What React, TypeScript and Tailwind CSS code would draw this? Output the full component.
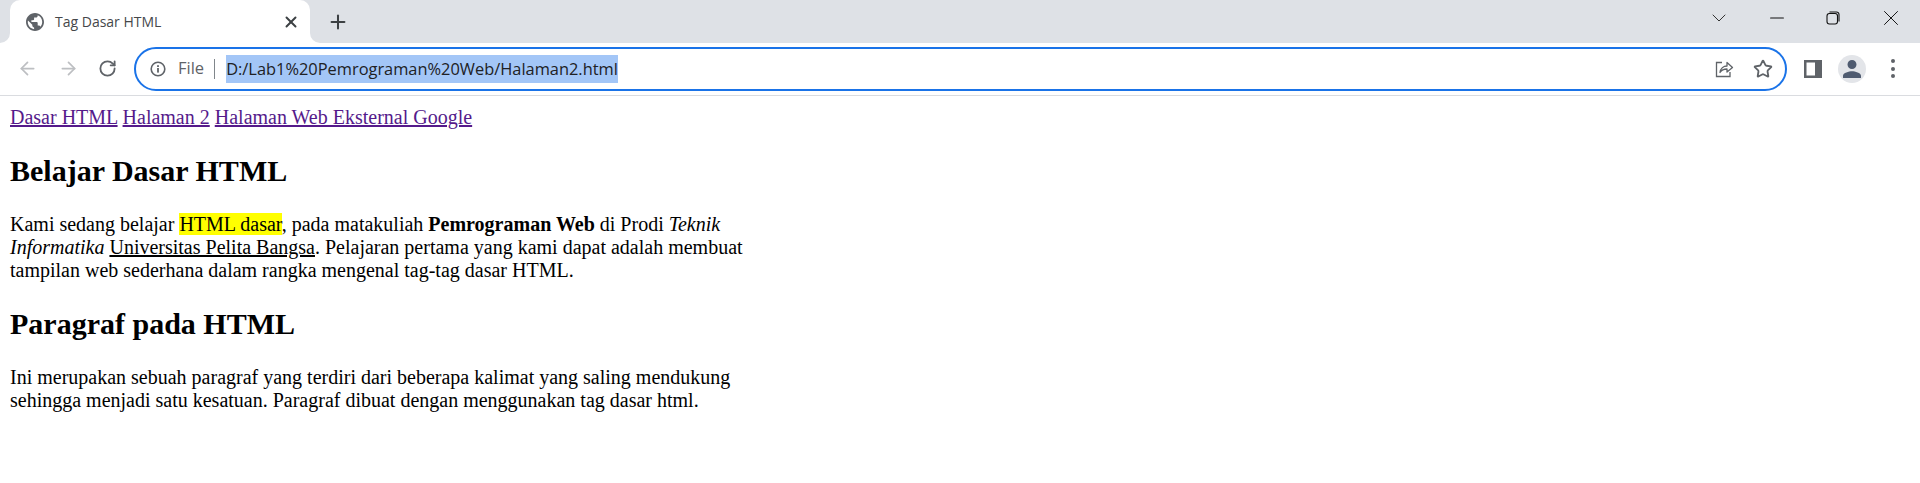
import React from 'react';
import { ArrowLeft, ArrowRight, RotateCw, X, Plus, Star, ChevronDown, Minus } from 'lucide-react';

const Corner: React.FC<{ side: 'left' | 'right' }> = ({ side }) => (
  <svg
    width="10"
    height="10"
    viewBox="0 0 10 10"
    className={side === 'left' ? 'absolute bottom-0 left-[-10px]' : 'absolute bottom-0 right-[-10px]'}
  >
    <path d={side === 'left' ? 'M10 0V10H0A10 10 0 0 0 10 0Z' : 'M0 0V10H10A10 10 0 0 1 0 0Z'} fill="#fff" />
  </svg>
);

const TabStrip: React.FC = () => (
  <div className="flex h-[43px] items-center bg-[#dee1e6] pl-[10px]">
    <div className="relative flex h-[43px] w-[300px] items-center rounded-t-[10px] bg-white pl-[16px] pr-[10px]">
      <Corner side="left" />
      <svg width="18" height="18" viewBox="2 2 20 20" className="shrink-0 fill-[#5f6368]">
        <path d="M12 2C6.48 2 2 6.48 2 12s4.48 10 10 10 10-4.48 10-10S17.52 2 12 2zm-1 17.93c-3.95-.49-7-3.85-7-7.93 0-.62.08-1.21.21-1.79L9 15v1c0 1.1.9 2 2 2v1.93zm6.9-2.54c-.26-.81-1-1.39-1.9-1.39h-1v-3c0-.55-.45-1-1-1H8v-2h2c.55 0 1-.45 1-1V7h2c1.1 0 2-.9 2-2v-.41c2.93 1.19 5 4.06 5 7.41 0 2.08-.8 3.97-2.1 5.39z" />
      </svg>
      <span className="ml-[11px] flex-1 font-['Open_Sans',sans-serif] text-[14px] text-[#45474a]">Tag Dasar HTML</span>
      <X className="h-[18px] w-[18px] text-[#3c4043]" strokeWidth={2.6} />
      <Corner side="right" />
    </div>
    <Plus className="ml-[17px] h-[22px] w-[22px] text-[#3c4043]" strokeWidth={2.2} />
    <div className="ml-auto mb-[7px] flex items-center pr-[16px] text-[#111]">
      <ChevronDown className="h-[24px] w-[24px] text-[#333]" strokeWidth={1} />
      <Minus className="ml-[35px] h-[22px] w-[22px]" strokeWidth={1.1} />
      <svg width="14" height="14" viewBox="0 0 14 14" fill="none" stroke="#111" strokeWidth="1.1" className="ml-[38px]">
        <rect x="1" y="2.5" width="10.5" height="10.5" rx="2.4" />
        <path d="M3.5 1H10.5A2.5 2.5 0 0 1 13 3.5V10.5" />
      </svg>
      <X className="ml-[38px] h-[26px] w-[26px]" strokeWidth={0.9} />
    </div>
  </div>
);

const Toolbar: React.FC = () => (
  <div className="flex h-[53px] items-center border-b border-[#dadce0] bg-white pb-[1px]">
    <ArrowLeft className="ml-[17px] h-[21px] w-[21px] text-[#bdbfc2]" strokeWidth={2} />
    <ArrowRight className="ml-[20px] h-[21px] w-[21px] text-[#bdbfc2]" strokeWidth={2} />
    <RotateCw className="ml-[19px] h-[19px] w-[19px] text-[#5f6368]" strokeWidth={2.3} />
    <div className="ml-[17px] flex h-[44px] w-[1653px] items-center rounded-full border-2 border-[#1a73e8] pl-[14px] pr-[12px]">
      <svg width="16" height="16" viewBox="0 0 16 16" fill="none" className="shrink-0">
        <circle cx="8" cy="8" r="6.8" stroke="#5f6368" strokeWidth="1.6" />
        <rect x="7.1" y="7" width="1.8" height="4.6" fill="#5f6368" />
        <rect x="7.1" y="4.2" width="1.8" height="1.8" fill="#5f6368" />
      </svg>
      <span className="ml-[12px] font-['Open_Sans',sans-serif] text-[16.5px] text-[#5f6368]">File</span>
      <span className="ml-[10px] h-[20px] w-[1px] bg-[#80868b]" />
      <span className="ml-[11px] bg-[#a3c6f7] font-['Open_Sans',sans-serif] text-[16.4px] leading-[28px] text-[#202124]">
        D:/Lab1%20Pemrograman%20Web/Halaman2.html
      </span>
      <div className="ml-auto flex items-center">
        <svg width="20" height="20" viewBox="0 0 20 20" fill="none" stroke="#5f6368" strokeWidth="1.3" className="mr-[19px]">
          <path d="M8 3.5H2.5V17.5H16V13" />
          <path d="M6 13.5C6.5 9.5 9.5 7 13 7V3.5L18.5 8.5L13 13V10C10 10 7.5 11 6 13.5Z" strokeLinejoin="round" />
        </svg>
        <Star className="h-[20px] w-[20px] text-[#5f6368]" strokeWidth={2.2} />
      </div>
    </div>
    <svg width="18" height="18" viewBox="0 0 18 18" className="ml-[17px] shrink-0">
      <path fillRule="evenodd" d="M0 0H18V18H0ZM2.5 2.5V15.5H11V2.5Z" fill="#5f6368" />
    </svg>
    <div className="ml-[16px] flex h-[28px] w-[28px] items-center justify-center rounded-full bg-[#e3e5e9]">
      <svg width="18" height="18" viewBox="4 4 16 16" className="fill-[#4f5b70]">
        <path d="M12 12c2.21 0 4-1.79 4-4s-1.79-4-4-4-4 1.79-4 4 1.79 4 4 4zm0 2c-2.67 0-8 1.34-8 4v2h16v-2c0-2.66-5.33-4-8-4z" />
      </svg>
    </div>
    <div className="ml-[25px] flex flex-col gap-[3.5px]">
      <span className="h-[4px] w-[4px] rounded-full bg-[#5f6368]" />
      <span className="h-[4px] w-[4px] rounded-full bg-[#5f6368]" />
      <span className="h-[4px] w-[4px] rounded-full bg-[#5f6368]" />
    </div>
  </div>
);

const linkClass = 'text-[#551a8b] underline';

export default function App() {
  return (
    <div className="h-[483px] overflow-hidden bg-white">
      <TabStrip />
      <Toolbar />
      <main className="w-[770px] p-[10px] font-['Liberation_Serif',serif] text-[20px] leading-[23px] text-black">
        <div>
          <a className={linkClass} href="#a">Dasar HTML</a>{' '}
          <a className={linkClass} href="#b">Halaman 2</a>{' '}
          <a className={linkClass} href="#c">Halaman Web Eksternal Google</a>
        </div>
        <h2 className="mb-[25px] mt-[25px] text-[30px] font-bold leading-[34px]">Belajar Dasar HTML</h2>
        <p>
          Kami sedang belajar <mark className="bg-[#ffff00] text-black">HTML dasar</mark>, pada matakuliah{' '}
          <b className="font-bold">Pemrograman Web</b> di Prodi <i>Teknik Informatika</i>{' '}
          <u>Universitas Pelita Bangsa</u>. Pelajaran pertama yang kami dapat adalah membuat tampilan web sederhana
          dalam rangka mengenal tag-tag dasar HTML.
        </p>
        <h2 className="mb-[25px] mt-[25px] text-[30px] font-bold leading-[34px]">Paragraf pada HTML</h2>
        <p>
          Ini merupakan sebuah paragraf yang terdiri dari beberapa kalimat yang saling mendukung sehingga menjadi satu
          kesatuan. Paragraf dibuat dengan menggunakan tag dasar html.
        </p>
      </main>
    </div>
  );
}
